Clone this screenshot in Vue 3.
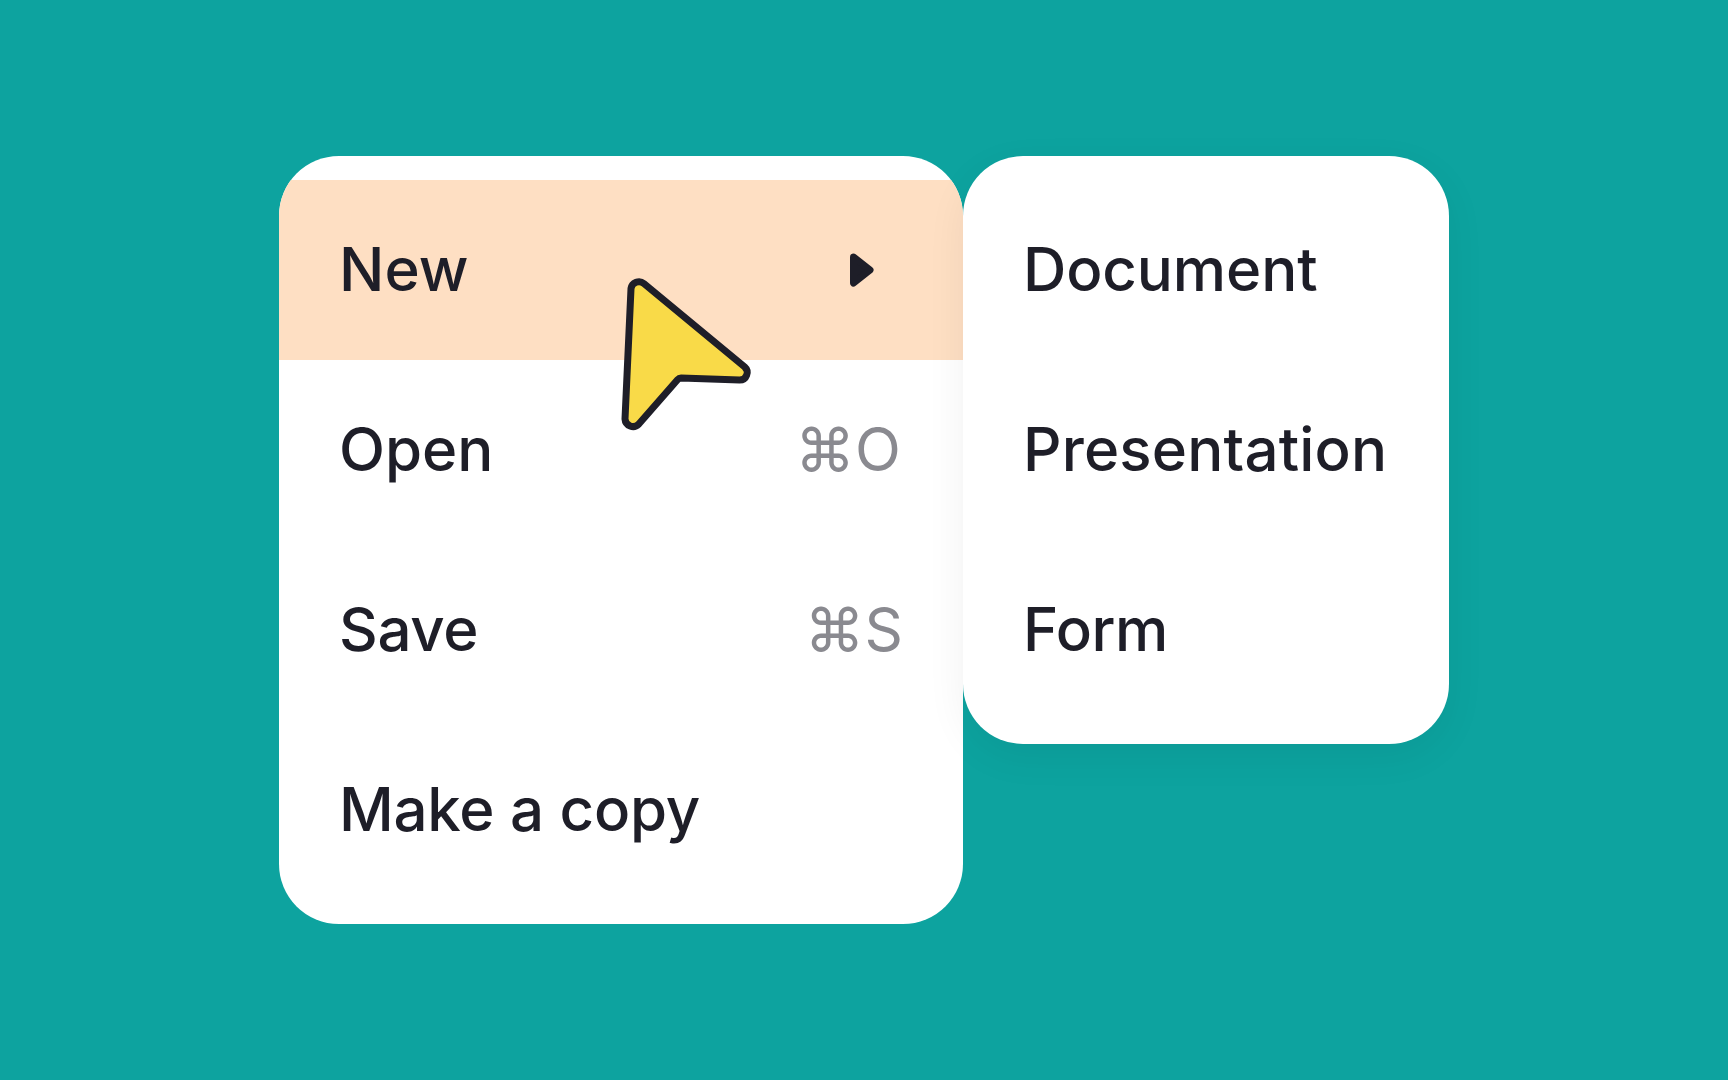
<script setup>
const primary = [
  { label: 'New', arrow: true, active: true, tracking: 0 },
  { label: 'Open', shortcut: '⌘O', shortcutClass: 'inset', tracking: 0 },
  { label: 'Save', shortcut: '⌘S', tracking: -0.3 },
  { label: 'Make a copy', tracking: -0.25 },
]
const secondary = [
  { label: 'Document', tracking: -0.1 },
  { label: 'Presentation', tracking: 0.18 },
  { label: 'Form', tracking: -0.5 },
]
const trackingStyle = (item) => ({ letterSpacing: `${item.tracking}px` })
</script>

<template>
  <main class="page">
    <div class="menus">
      <ul class="menu primary">
        <li v-for="item in primary" :key="item.label" class="row" :class="{ active: item.active }">
          <span class="label" :style="trackingStyle(item)">{{ item.label }}</span>
          <svg v-if="item.arrow" class="arrow" width="24" height="36" viewBox="0 0 24 36" aria-hidden="true">
            <path d="M3.5 5 L20 18 L3.5 31 Z" fill="#1e1e28" stroke="#1e1e28" stroke-width="7" stroke-linejoin="round" />
          </svg>
          <span v-if="item.shortcut" class="shortcut" :class="item.shortcutClass">{{ item.shortcut }}</span>
        </li>
      </ul>
      <ul class="menu secondary">
        <li v-for="item in secondary" :key="item.label" class="row">
          <span class="label" :style="trackingStyle(item)">{{ item.label }}</span>
        </li>
      </ul>
    </div>
    <svg class="cursor" width="140" height="170" viewBox="620 270 140 170" aria-hidden="true">
      <path
        d="M631 288.6 A8 8 0 0 1 644 283.6 L744.6 366.9 A7.5 7.5 0 0 1 739.6 380 L681 378 Q679 378 677.5 379.7 L638.6 424.2 A8 8 0 0 1 625 419 Z"
        fill="#f9da48"
        stroke="#1e1e28"
        stroke-width="7"
        stroke-linejoin="round"
      />
    </svg>
  </main>
</template>

<style>
html, body { margin: 0; background: #0da39f; }
</style>

<style scoped>
.page {
  position: relative;
  box-sizing: border-box;
  width: 1728px;
  height: 1080px;
  padding: 156px 0 0 279px;
  overflow: hidden;
  background: #0da39f;
  font-family: Inter, "Liberation Sans", sans-serif;
  color: #1e1e28;
}
.menus { display: flex; align-items: flex-start; }
.menu {
  margin: 0;
  padding: 24px 0;
  list-style: none;
  background: #fff;
  border-radius: 60px;
  overflow: hidden;
}
.primary { width: 684px; }
.secondary {
  width: 486px;
  box-shadow: 0 12px 40px rgba(0, 0, 0, 0.06);
  position: relative;
}
.row {
  display: flex;
  align-items: center;
  justify-content: space-between;
  box-sizing: border-box;
  height: 180px;
  padding: 0 60px;
  font-size: 60px;
  font-weight: 500;
}
.label { margin-bottom: 2px; }
.active { background: #fedfc3; padding-right: 89px; }
.shortcut { margin-bottom: 2px; font-size: 60px; font-weight: 400; color: #8a8a90; }
.inset { margin-right: 2px; }
.cursor { position: absolute; left: 620px; top: 270px; }
</style>
